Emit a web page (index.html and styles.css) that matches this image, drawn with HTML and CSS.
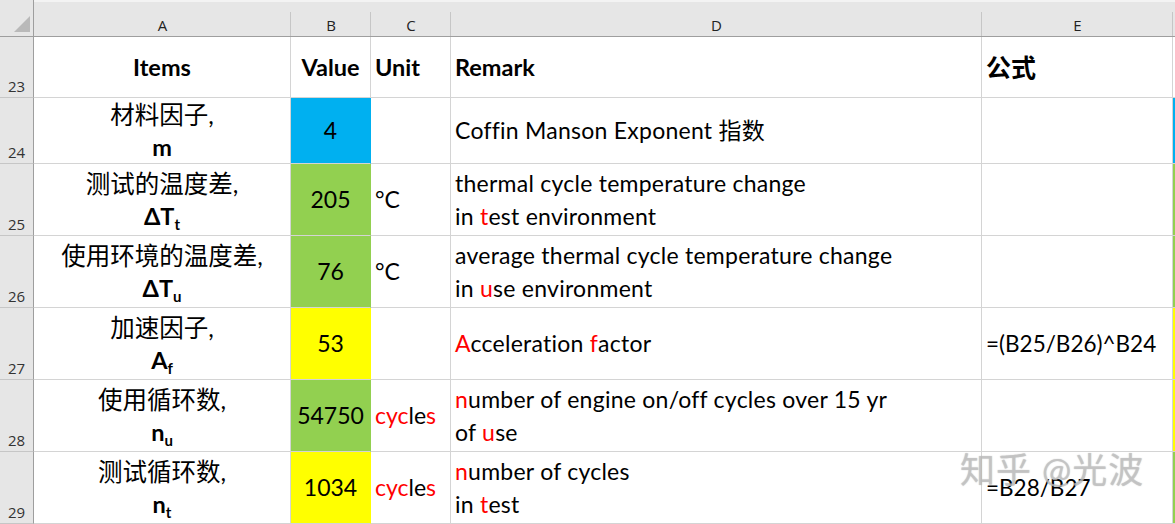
FILE: index.html
```html
<!DOCTYPE html>
<html lang="zh">
<head>
    <meta charset="UTF-8">
    <title>加速因子计算</title>
    <link rel="stylesheet" href="styles.css">
</head>
<body>
    <div class="sheet">
        <!-- 列标题 -->
        <div class="cell corner">
            <svg width="16" height="16" viewBox="0 0 16 16"><path d="M16 0 L16 16 L0 16 Z" fill="#b9b9b9"/></svg>
        </div>
        <div class="cell colhead">A</div>
        <div class="cell colhead">B</div>
        <div class="cell colhead">C</div>
        <div class="cell colhead">D</div>
        <div class="cell colhead">E</div>
        <div class="cell colhead edge"></div>

        <!-- 23 -->
        <div class="cell rowhead">23</div>
        <div class="cell item"><b>Items</b></div>
        <div class="cell val"><b>Value</b></div>
        <div class="cell unit"><b>Unit</b></div>
        <div class="cell remark"><b>Remark</b></div>
        <div class="cell formula"><b class="title">公式</b></div>
        <div class="cell edge"></div>

        <!-- 24 -->
        <div class="cell rowhead">24</div>
        <div class="cell item"><span>材料因子,</span><b>m</b></div>
        <div class="cell val blue">4</div>
        <div class="cell unit"></div>
        <div class="cell remark"><span>Coffin Manson Exponent 指数</span></div>
        <div class="cell formula"></div>
        <div class="cell edge blue"></div>

        <!-- 25 -->
        <div class="cell rowhead">25</div>
        <div class="cell item"><span>测试的温度差,</span><b>ΔT<sub>t</sub></b></div>
        <div class="cell val green">205</div>
        <div class="cell unit">°C</div>
        <div class="cell remark"><span>thermal cycle temperature change</span><span>in <i class="red">t</i>est environment</span></div>
        <div class="cell formula"></div>
        <div class="cell edge green"></div>

        <!-- 26 -->
        <div class="cell rowhead">26</div>
        <div class="cell item"><span>使用环境的温度差,</span><b>ΔT<sub>u</sub></b></div>
        <div class="cell val green">76</div>
        <div class="cell unit">°C</div>
        <div class="cell remark"><span>average thermal cycle temperature change</span><span>in <i class="red">u</i>se environment</span></div>
        <div class="cell formula"></div>
        <div class="cell edge green"></div>

        <!-- 27 -->
        <div class="cell rowhead">27</div>
        <div class="cell item"><span>加速因子,</span><b>A<sub>f</sub></b></div>
        <div class="cell val yellow">53</div>
        <div class="cell unit"></div>
        <div class="cell remark"><span><i class="red">A</i>cceleration <i class="red">f</i>actor</span></div>
        <div class="cell formula">=(B25/B26)^B24</div>
        <div class="cell edge yellow"></div>

        <!-- 28 -->
        <div class="cell rowhead">28</div>
        <div class="cell item"><span>使用循环数,</span><b>n<sub>u</sub></b></div>
        <div class="cell val green">54750</div>
        <div class="cell unit"><span><i class="red">cyc</i>le<i class="red">s</i></span></div>
        <div class="cell remark"><span><i class="red">n</i>umber of engine on/off cycles over 15 yr</span><span>of <i class="red">u</i>se</span></div>
        <div class="cell formula"></div>
        <div class="cell edge yellow"></div>

        <!-- 29 -->
        <div class="cell rowhead">29</div>
        <div class="cell item"><span>测试循环数,</span><b>n<sub>t</sub></b></div>
        <div class="cell val yellow">1034</div>
        <div class="cell unit"><span><i class="red">cyc</i>le<i class="red">s</i></span></div>
        <div class="cell remark"><span><i class="red">n</i>umber of cycles</span><span>in <i class="red">t</i>est</span></div>
        <div class="cell formula">=B28/B27</div>
        <div class="cell edge green"></div>

        <div class="watermark">知乎 @光波</div>
    </div>
</body>
</html>
```

FILE: styles.css
```css
/* page */
body {
    margin: 0;
    background: #fff;
    color: #000;
    font-family: Lato, "Noto Sans CJK SC", sans-serif;
}

.sheet {
    position: relative;
    display: grid;
    grid-template-columns: 34px 257px 80px 80px 531px 191px 2px;
    grid-template-rows: 37px 61px 66px repeat(5, 72px);
    width: 1175px;
    height: 524px;
    overflow: hidden;
}

.cell {
    box-sizing: border-box;
    display: flex;
    align-items: center;
    border-right: 1px solid #d4d4d4;
    border-bottom: 1px solid #d4d4d4;
    font-size: 23px;
    line-height: 33px;
    white-space: nowrap;
}

/* headers */
.corner,
.colhead,
.rowhead {
    background: #e6e6e6;
    color: #222;
    font-size: 15px;
    font-family: "Open Sans", sans-serif;
}

.corner {
    border-right-color: #9e9e9e;
    border-bottom-color: #9e9e9e;
    justify-content: flex-end;
    align-items: flex-end;
    padding: 0 3px 4px 0;
}

.colhead {
    position: relative;
    justify-content: center;
    padding-top: 12px;
    border-right: none;
    border-bottom-color: #9e9e9e;
    border-top: 2px solid #f3f3f3;
}

.colhead::after {
    content: "";
    position: absolute;
    right: 0;
    top: 10px;
    bottom: 0;
    width: 1px;
    background: #c6c6c6;
}

.colhead.edge::after {
    display: none;
}

.rowhead {
    align-items: flex-end;
    padding: 0 0 3px 8px;
    line-height: 1;
    color: #333;
    border-right-color: #9e9e9e;
    border-bottom-color: #c6c6c6;
}

/* data */
.item {
    flex-direction: column;
    justify-content: center;
    text-align: center;
}

.item span {
    font-size: 24.5px;
}

b {
    font-weight: 700;
    font-size: 23.5px;
    letter-spacing: 0;
}

sub {
    font-size: 15px;
    vertical-align: -5px;
    line-height: 0;
}

.val {
    justify-content: center;
}

.unit,
.remark,
.formula {
    padding-left: 4px;
}

.remark {
    flex-direction: column;
    justify-content: center;
    align-items: flex-start;
    letter-spacing: 0.25px;
}

.formula {
    font-size: 22.5px;
}

.title {
    font-size: 25px;
}

.edge {
    border-right: none;
}

i {
    font-style: normal;
}

.red {
    color: #f00;
}

.blue {
    background: #00b0f0;
    border-right-color: #00b0f0;
}

.green {
    background: #92d050;
    border-right-color: #92d050;
}

.yellow {
    background: #ffff00;
    border-right-color: #ffff00;
}

.watermark {
    position: absolute;
    left: 960px;
    top: 445px;
    font-size: 35px;
    line-height: 48px;
    letter-spacing: 1px;
    color: rgba(200, 200, 200, 0.7);
    text-shadow: 0 0 1px rgba(110, 110, 110, 0.5);
    pointer-events: none;
}
```
